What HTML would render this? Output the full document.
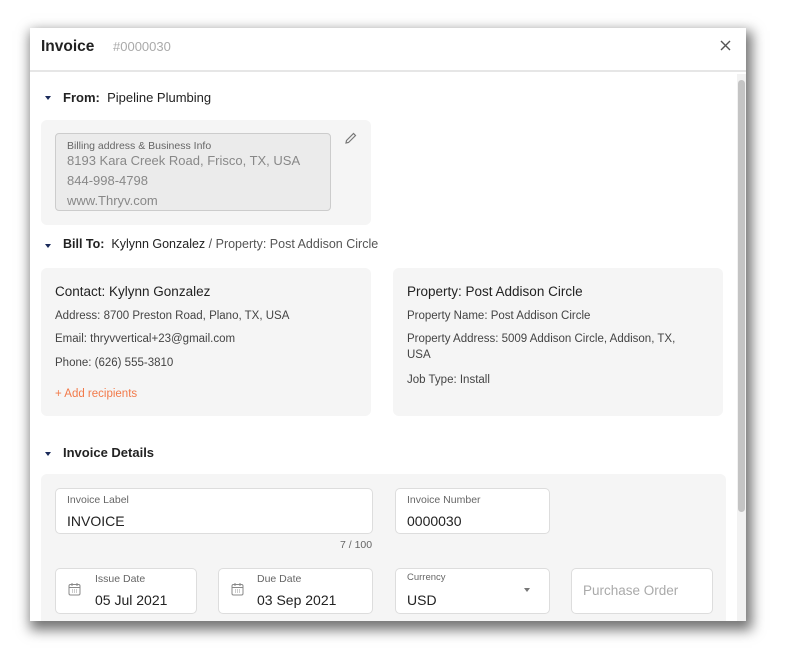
<!DOCTYPE html>
<html><head><style>
*{margin:0;padding:0;box-sizing:border-box}
body{width:798px;height:665px;background:#fff;font-family:"Liberation Sans",sans-serif;position:relative;overflow:hidden;color:#222}
.a{position:absolute;white-space:nowrap}
#m{position:absolute;left:30px;top:28px;width:716px;height:593px;background:#fff;box-shadow:3px 6px 12px 3px rgba(0,0,0,.55);overflow:hidden}
.card{position:absolute;background:#f5f5f5;border-radius:6px}
.inp{position:absolute;background:#fff;border:1px solid #ddd;border-radius:5px}
.lbl{font-size:10.5px;color:#666}
.val{font-size:14px;color:#222}
.tri{width:0;height:0;border-left:3.5px solid transparent;border-right:3.5px solid transparent;border-top:4px solid #1a2a5a}
.sm{font-size:11.5px;color:#444}
</style></head><body>
<div id="m">
<div class="a" style="left:11px;top:10px;font-size:15.5px;font-weight:bold;color:#222">Invoice</div>
<div class="a" style="left:83px;top:11px;font-size:13px;color:#aaa">#0000030</div>
<svg class="a" style="left:690px;top:12px" width="11" height="11" viewBox="0 0 11 11"><path d="M1 1L10 10M10 1L1 10" stroke="#555" stroke-width="1.4"/></svg>
<div style="position:absolute;left:0;top:42px;width:716px;height:2px;background:#e6e6e6"></div>
<div style="position:absolute;left:707px;top:46px;width:9px;height:547px;background:#f2f2f2"></div>
<div style="position:absolute;left:708px;top:52px;width:7px;height:432px;background:#c4c4c4;border-radius:4px"></div>

<div class="a tri" style="left:15px;top:68px"></div>
<div class="a" style="left:33px;top:62px;font-size:13px"><b style="font-weight:600">From:</b>&nbsp; Pipeline Plumbing</div>
<div class="card" style="left:11px;top:92px;width:330px;height:105px"></div>
<div class="a" style="left:25px;top:105px;width:276px;height:78px;background:#ebebeb;border:1px solid #ccc;border-radius:4px"></div>
<div class="a" style="left:37px;top:112px;font-size:10.5px;color:#666">Billing address &amp; Business Info</div>
<div class="a" style="left:37px;top:125px;font-size:13px;color:#888">8193 Kara Creek Road, Frisco, TX, USA</div>
<div class="a" style="left:37px;top:145px;font-size:13px;color:#888">844-998-4798</div>
<div class="a" style="left:37px;top:165px;font-size:13px;color:#888">www.Thryv.com</div>
<svg class="a" style="left:314px;top:103px" width="14" height="14" viewBox="0 0 14 14"><path d="M2 12 L2.5 9.5 L9.5 2.5 L11.5 4.5 L4.5 11.5 Z" fill="none" stroke="#777" stroke-width="1.2"/></svg>

<div class="a tri" style="left:15px;top:216px"></div>
<div class="a" style="left:33px;top:209px;font-size:12.5px"><b style="font-weight:600">Bill To:</b>&nbsp; Kylynn Gonzalez <span style="color:#555">/ Property: Post Addison Circle</span></div>

<div class="card" style="left:11px;top:240px;width:330px;height:148px"></div>
<div class="a" style="left:25px;top:256px;font-size:13.5px;color:#222">Contact: Kylynn Gonzalez</div>
<div class="a sm" style="left:25px;top:282px">Address: 8700 Preston Road, Plano, TX, USA</div>
<div class="a sm" style="left:25px;top:305px">Email: thryvvertical+23@gmail.com</div>
<div class="a sm" style="left:25px;top:329px">Phone: (626) 555-3810</div>
<div class="a" style="left:25px;top:360px;font-size:11.5px;color:#f27a4a">+ Add recipients</div>

<div class="card" style="left:363px;top:240px;width:330px;height:148px"></div>
<div class="a" style="left:377px;top:256px;font-size:13.5px;color:#222">Property: Post Addison Circle</div>
<div class="a sm" style="left:377px;top:282px">Property Name: Post Addison Circle</div>
<div class="a sm" style="left:377px;top:305px">Property Address: 5009 Addison Circle, Addison, TX,</div>
<div class="a sm" style="left:377px;top:321px">USA</div>
<div class="a sm" style="left:377px;top:346px">Job Type: Install</div>

<div class="a tri" style="left:15px;top:424px"></div>
<div class="a" style="left:33px;top:417px;font-size:13px;font-weight:600">Invoice Details</div>
<div class="card" style="left:11px;top:446px;width:685px;height:160px"></div>

<div class="inp" style="left:25px;top:460px;width:318px;height:46px"></div>
<div class="a lbl" style="left:37px;top:466px">Invoice Label</div>
<div class="a val" style="left:37px;top:485px">INVOICE</div>
<div class="a" style="left:310px;top:511px;font-size:10.5px;color:#666">7 / 100</div>
<div class="inp" style="left:365px;top:460px;width:155px;height:46px"></div>
<div class="a lbl" style="left:377px;top:466px">Invoice Number</div>
<div class="a val" style="left:377px;top:485px">0000030</div>

<div class="inp" style="left:25px;top:540px;width:142px;height:46px"></div>
<div class="a lbl" style="left:65px;top:545px">Issue Date</div>
<div class="a val" style="left:65px;top:564px">05 Jul 2021</div>
<div class="inp" style="left:188px;top:540px;width:155px;height:46px"></div>
<div class="a lbl" style="left:227px;top:545px">Due Date</div>
<div class="a val" style="left:227px;top:564px">03 Sep 2021</div>
<svg class="a" style="left:38px;top:554px" width="13" height="14" viewBox="0 0 13 14"><rect x="1" y="2.5" width="11" height="10.5" rx="1.5" fill="none" stroke="#888"/><path d="M1 5.5H12M4 1V4M9 1V4" stroke="#888"/><path d="M4 8h1M6 8h1M8 8h1M4 10h1M6 10h1M8 10h1" stroke="#999"/></svg>
<svg class="a" style="left:201px;top:554px" width="13" height="14" viewBox="0 0 13 14"><rect x="1" y="2.5" width="11" height="10.5" rx="1.5" fill="none" stroke="#888"/><path d="M1 5.5H12M4 1V4M9 1V4" stroke="#888"/><path d="M4 8h1M6 8h1M8 8h1M4 10h1M6 10h1M8 10h1" stroke="#999"/></svg>
<div class="inp" style="left:365px;top:540px;width:155px;height:46px"></div>
<div class="a" style="left:377px;top:544px;font-size:9.5px;color:#666">Currency</div>
<div class="a val" style="left:377px;top:564px">USD</div>
<div class="a" style="left:494px;top:560px;width:0;height:0;border-left:3.5px solid transparent;border-right:3.5px solid transparent;border-top:4px solid #777"></div>
<div class="inp" style="left:541px;top:540px;width:142px;height:46px"></div>
<div class="a" style="left:553px;top:555px;font-size:13.5px;color:#aaa">Purchase Order</div>
</div>
</body></html>
